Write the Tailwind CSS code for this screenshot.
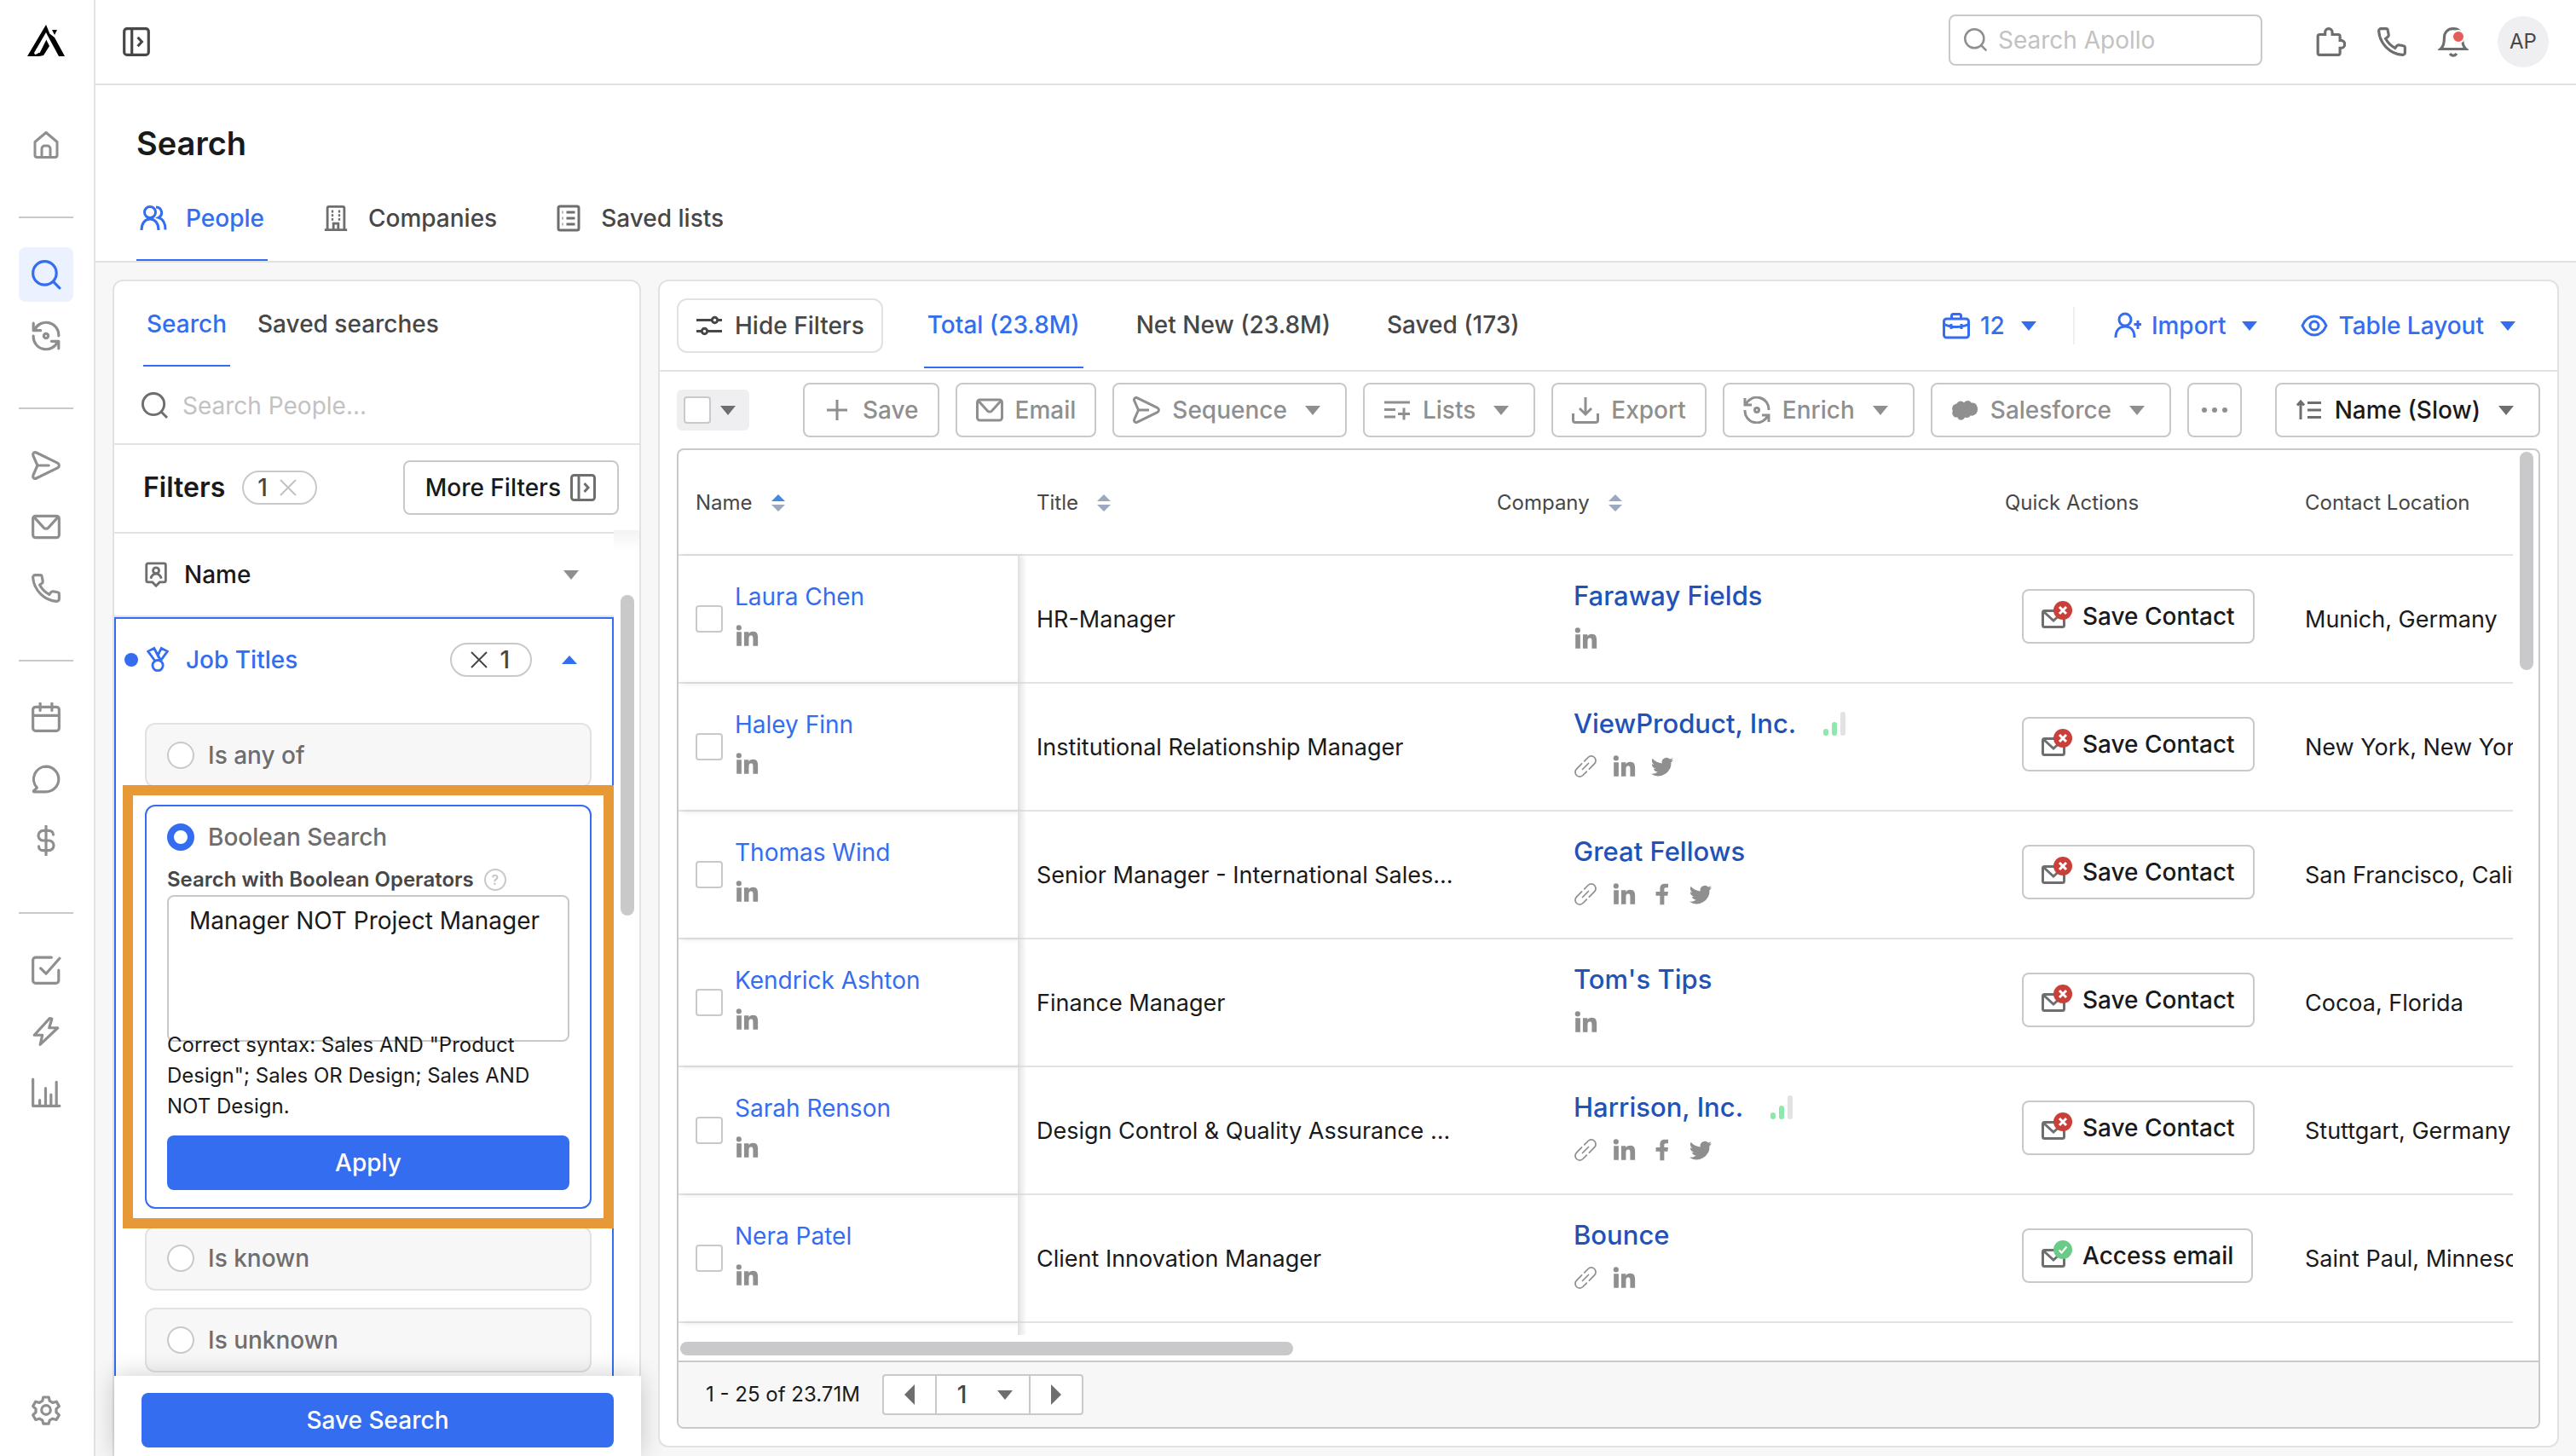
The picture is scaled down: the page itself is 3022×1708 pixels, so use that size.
<!DOCTYPE html>
<html lang="en">

<head>
    <meta charset="UTF-8">
    <meta name="viewport" content="width=device-width, initial-scale=1.0">
    <title>Search | Apollo</title>
    <script src="https://cdn.jsdelivr.net/npm/@tailwindcss/browser@4"></script>
</head>

<body class="flex h-screen overflow-hidden bg-white font-['Inter',sans-serif] text-[28px] leading-8 text-[#1a1a1a]">

    <!-- icon sprite -->
    <svg class="hidden" xmlns="http://www.w3.org/2000/svg">
        <defs>
            <g id="panel"><rect x="2.5" y="1.500" width="27" height="29" rx="3"/><path d="M11 2v28M17.500 11l4.500 5-4.500 5"/></g>
            <g id="home"><path d="M3 12.500 16 1.500l13 11V28a2.500 2.500 0 0 1-2.500 2.500h-21A2.500 2.500 0 0 1 3 28z"/><path d="M11 30V20.500a3.500 3.500 0 0 1 3.500-3.500h3a3.500 3.500 0 0 1 3.500 3.500V30"/></g>
            <g id="search"><circle cx="14.500" cy="14.500" r="13"/><path d="m24 24 7 7"/></g>
            <g id="enrich"><path d="M2 2v8h8M3 10A14 14 0 0 1 30 16M30 30v-8h-8M29 22A14 14 0 0 1 2 16"/><circle cx="16" cy="16" r="2.500"/></g>
            <g id="send"><path d="M1.700 5c-.8-2.500 1.300-4.300 3.600-3.200l23.500 11.500c2.200 1.100 2.200 4.300 0 5.400L5.300 30.200C3 31.300.9 29.500 1.700 27L6.500 16z"/><path d="M6.500 16H19"/></g>
            <g id="mail"><rect x="1.500" y="4" width="29" height="24" rx="3"/><path d="m3 5.500 10.500 11.500a3.500 3.500 0 0 0 5 0L29 5.500"/></g>
            <g id="phone"><path d="M4 1.500h5.500a2 2 0 0 1 2 1.700l.9 5a2.500 2.500 0 0 1-.9 2.300L9 12.500C11.500 17 15 20.500 19.500 23l2-2.500a2.500 2.500 0 0 1 2.300-.9l5 .9a2 2 0 0 1 1.700 2V28a2.500 2.500 0 0 1-2.700 2.500C14 29.500 2.500 18 1.500 4.200A2.500 2.500 0 0 1 4 1.500z"/></g>
            <g id="calendar"><rect x="1.500" y="4" width="29" height="26.500" rx="3"/><path d="M2 13.500h28M9.500 0v8M22.500 0v8"/></g>
            <g id="chat"><path d="M16 2a14 14 0 1 1 0 28H2.500c-.5 0-.5-.8 0-1.200L6 25.500A14 14 0 0 1 16 2z"/></g>
            <g id="dollar"><path d="M16 0v32M24 9.500C24 6.500 21.500 5 19 5h-6a5.500 5.500 0 0 0 0 11h6a5.500 5.500 0 0 1 0 11h-6c-2.500 0-5-1.500-5-4.500"/></g>
            <g id="check"><path d="M22 2H4.500a3 3 0 0 0-3 3v22.500a3 3 0 0 0 3 3H27a3 3 0 0 0 3-3V16"/><path d="m10 14 6 6L31 3"/></g>
            <g id="bolt"><path d="M20 1.500 3 20h9L9.500 30.500 29 12h-9.500L22.500 2z"/></g>
            <g id="chart"><path d="M1.500 1v29.500H31M9 24v6M15.500 11v19M21.500 18v12M27.500 4v26"/></g>
            <g id="gear"><circle cx="16" cy="16" r="5"/><path d="M13 1.800h6l1 4.200 3.300 1.900 4.200-1.200 3 5.200-3.200 3v3.700l3.200 3-3 5.200-4.200-1.200L20 27.500l-1 3.700h-6l-1-3.700-3.300-1.900-4.200 1.200-3-5.200 3.200-3v-3.700l-3.200-3 3-5.200 4.200 1.200L12 6z"/></g>
            <g id="people"><circle cx="12" cy="9" r="6.500"/><path d="M2 30c0-8 4-13 10-13s10 5 10 13M19 3a6.500 6.500 0 0 1 3 12.300c5 1.500 8 7 8 14.200"/></g>
            <g id="company"><path d="M5.500 30V3.500a2 2 0 0 1 2-2h17a2 2 0 0 1 2 2V30M2 30.500h28M13 30v-7.500h6V30"/><path d="M10.500 7.500h2.500M19 7.500h2.500M10.500 12.500h2.500M19 12.500h2.500M10.500 17.500h2.500M19 17.500h2.500"/></g>
            <g id="list"><rect x="4" y="2" width="24" height="28" rx="2"/><path d="M8.500 9h1M8.500 16h1M8.500 23h1M13.500 9h10M13.500 16h10M13.500 23h10"/></g>
            <g id="sliders"><path d="M1 9.500h18M26 9.500h5M1 22.500h6M14 22.500h17"/><circle cx="22.500" cy="9.500" r="3.200"/><circle cx="10.500" cy="22.500" r="3.200"/></g>
            <g id="badge"><path d="M6 2.500h20a2 2 0 0 1 2 2V24a2 2 0 0 1-2 2h-5.500L16 30.500 11.500 26H6a2 2 0 0 1-2-2V4.500a2 2 0 0 1 2-2z"/><circle cx="16" cy="11.500" r="3.700"/><path d="M9.500 21.500c1-4.500 3-6 6.500-6s5.500 1.500 6.500 6"/></g>
            <g id="medal"><circle cx="16" cy="23.500" r="6.500"/><path d="M12 17 4 6l7.500-4L16 11l4.500-9L28 6l-8 11M11.500 2 19 16"/></g>
            <g id="x"><path d="m7 7 18 18M25 7 7 25"/></g>
            <g id="plus"><path d="M16 4v24M4 16h24"/></g>
            <g id="addlist"><path d="M1 7h30M1 15.500h13M1 24h13M24 13.500v14M17 20.500h14"/></g>
            <g id="export"><path d="M16 1v19M9 14l7 7 7-7M1.500 20v8a2.500 2.500 0 0 0 2.500 2.500h24a2.500 2.500 0 0 0 2.500-2.500v-8"/></g>
            <g id="sort"><path d="M6 27V7M2 10.500 6 6l4 4.500M14 7.500h16M14 16h16M14 24.500h16"/></g>
            <g id="briefcase"><rect x="1.500" y="8" width="29" height="22" rx="3"/><path d="M10.500 8V4.500a2 2 0 0 1 2-2h7a2 2 0 0 1 2 2V8M2 14.500c8 4 20 4 28 0M10 14v6M22 14v6"/></g>
            <g id="useradd"><circle cx="13" cy="9" r="7"/><path d="M2 30c0-8 4-13 11-13s11 5 11 13M28 10v10M23.500 14.500h9"/></g>
            <g id="eye"><path d="M2 16C5 9 10 5 16 5s11 4 14 11c-3 7-8 11-14 11S5 23 2 16z"/><circle cx="16" cy="16" r="5"/></g>
            <g id="puzzle"><path d="M3 10a2 2 0 0 1 2-2h6V5.500a4 4 0 0 1 8 0V8h6.500a2 2 0 0 1 2 2v4.500h1a4 4 0 0 1 0 8.500h-1v5.500a2 2 0 0 1-2 2H5a2 2 0 0 1-2-2z"/></g>
            <g id="bell"><path d="M2 25h28c-3-2.500-4-6-4-12 0-6.500-4-10.500-10-10.500S6 6.500 6 13c0 6-1 9.500-4 12zM12.500 30c1.500 3 5.500 3 7 0"/></g>
            <g id="link"><path d="m14.500 9 5-5a5.800 5.800 0 0 1 8.500 8.500l-7 7M17.500 23l-5 5A5.800 5.800 0 0 1 4 19.500l7-7M12 20l8-8"/></g>
            <g id="cloud"><path d="M6 8c2-4 7-4 9-1 3-4 8-3 9 0 5-1 8 3 8 8s-4 9-9 8c-2 3-5 3-7 2-2 5-9 4-9 0-5 1-8-4-6-8-2-4 0-8 5-9z"/></g>
            <g id="linkedin"><circle cx="5.500" cy="5" r="3.500"/><path d="M2.500 10.500h6.500v19H2.500zM12.500 10.500h6.200v2.600c1-1.800 3-3.100 5.700-3.100 5.500 0 6.600 3.600 6.600 8.300v11.200h-6.500v-9.500c0-2.200 0-4.700-2.700-4.700s-3 2.200-3 4.700v9.500h-6.300z"/></g>
            <g id="facebook"><path d="M13 30V18H7.500v-5.500H13V8.500C13 4 15.500 2 19.500 2H24v5.200h-3c-1.800 0-2.300.8-2.300 2.300v3H24L23.200 18h-4.500v12z"/></g>
            <g id="twitter"><path d="M31 7.200a12 12 0 0 1-3.500 1c1.300-.8 2.200-2 2.700-3.400a12 12 0 0 1-3.900 1.500 6.200 6.200 0 0 0-10.600 5.600A17.500 17.500 0 0 1 3 5.500a6.200 6.200 0 0 0 1.900 8.200 6 6 0 0 1-2.800-.8c0 3 2 5.600 5 6.200a6 6 0 0 1-2.800.1 6.200 6.200 0 0 0 5.800 4.300A12.400 12.400 0 0 1 1 26a17.500 17.500 0 0 0 27-15.500 12 12 0 0 0 3-3.300z"/></g>
            <path id="caret" d="M7 11h18l-9 11z"/>
            <path id="caretup" d="M7 21h18l-9-10z"/>
        </defs>
    </svg>

    <nav aria-label="Main" class="flex w-28 shrink-0 flex-col items-center border-r-2 border-[#e2e2e2] pr-[2px] text-[#8f8f8f] fill-none stroke-current stroke-3 [stroke-linecap:round] [stroke-linejoin:round]">
        <a href="#" aria-label="Apollo" class="mt-7 mb-[98px] text-black"><svg class="h-10 w-12 fill-current stroke-none" viewBox="0 0 48 40"><path d="M24 1 29 13 26 14 24 10 10 34l2 4H2zM29 12l5 4 12 22h-7L26 14z"/><path d="M24 18 28 26 21 37 16 38H6l8-3 3-3z"/><path d="m24 17-8 16" stroke="#fff" stroke-width="2"/><path d="M31 7h6l-3 6z"/></svg></a>
        <a href="#" aria-label="Home" class="-mt-7 flex size-16 items-center justify-center rounded-lg"><svg class="size-9" viewBox="-2 -1 36 34"><use href="#home"/></svg></a>
        <hr class="mt-[52px] mb-[34px] w-16 border-t-2 border-[#c9c9c9]">
        <a href="#" aria-label="Search" class="flex size-16 items-center justify-center rounded-lg bg-[#ebf1fe] text-[#346df0]"><svg class="size-9" viewBox="-1 -1 34 34"><use href="#search"/></svg></a>
        <a href="#" aria-label="Enrich" class="mt-2 flex size-16 items-center justify-center"><svg class="size-9" viewBox="-1 -1 34 34"><use href="#enrich"/></svg></a>
        <hr class="mt-[52px] mb-[34px] w-16 border-t-2 border-[#c9c9c9]">
        <a href="#" aria-label="Sequences" class="flex size-16 items-center justify-center"><svg class="size-9" viewBox="-1 -1 34 34"><use href="#send"/></svg></a>
        <a href="#" aria-label="Emails" class="mt-2 flex size-16 items-center justify-center"><svg class="size-9" viewBox="-1 -1 34 34"><use href="#mail"/></svg></a>
        <a href="#" aria-label="Calls" class="mt-2 flex size-16 items-center justify-center"><svg class="size-9" viewBox="-1 -1 34 34"><use href="#phone"/></svg></a>
        <hr class="mt-[52px] mb-[34px] w-16 border-t-2 border-[#c9c9c9]">
        <a href="#" aria-label="Meetings" class="flex size-16 items-center justify-center"><svg class="size-9" viewBox="-1 -1 34 34"><use href="#calendar"/></svg></a>
        <a href="#" aria-label="Conversations" class="mt-2 flex size-16 items-center justify-center"><svg class="size-9" viewBox="-1 -1 34 34"><use href="#chat"/></svg></a>
        <a href="#" aria-label="Deals" class="mt-2 flex size-16 items-center justify-center"><svg class="size-9" viewBox="-1 -1 34 34"><use href="#dollar"/></svg></a>
        <hr class="mt-[52px] mb-[34px] w-16 border-t-2 border-[#c9c9c9]">
        <a href="#" aria-label="Tasks" class="flex size-16 items-center justify-center"><svg class="size-9" viewBox="-1 -1 34 34"><use href="#check"/></svg></a>
        <a href="#" aria-label="Workflows" class="mt-2 flex size-16 items-center justify-center"><svg class="size-9" viewBox="-1 -1 34 34"><use href="#bolt"/></svg></a>
        <a href="#" aria-label="Analytics" class="mt-2 flex size-16 items-center justify-center"><svg class="size-9" viewBox="-1 -1 34 34"><use href="#chart"/></svg></a>
        <a href="#" aria-label="Settings" class="mt-auto mb-[22px] flex size-16 items-center justify-center"><svg class="size-9" viewBox="-1 -1 34 34"><use href="#gear"/></svg></a>
    </nav>

    <div class="flex min-w-0 flex-1 flex-col">

        <!-- top bar -->
        <header class="flex h-[100px] shrink-0 items-center border-b-2 border-[#e2e2e2] pr-8 pl-[30px] text-[#6e6e6e]">
            <button aria-label="Expand menu" class="text-[#474747]"><svg class="size-9 fill-none stroke-current stroke-3" viewBox="-1 -1 34 34"><use href="#panel"/></svg></button>
            <label class="mr-[62px] mb-1 ml-auto flex h-15 w-[368px] items-center gap-3 rounded-lg border-2 border-[#c9c9c9] pl-4 text-[#8f8f8f]">
                <svg class="size-7 shrink-0 fill-none stroke-current stroke-3" viewBox="0 0 33 33"><use href="#search"/></svg>
                <input type="text" aria-label="Search Apollo" placeholder="Search Apollo" class="w-full outline-none placeholder:text-[#c2c2c2]">
            </label>
            <button aria-label="Extensions"><svg class="size-9 fill-none stroke-current stroke-3" viewBox="0 0 34 32"><use href="#puzzle"/></svg></button>
            <button aria-label="Dialer" class="ml-9"><svg class="size-9 fill-none stroke-current stroke-3" viewBox="-1 -1 34 34"><use href="#phone"/></svg></button>
            <button aria-label="Notifications" class="relative ml-9">
                <svg class="size-9 fill-none stroke-current stroke-3" viewBox="-1 0 34 34"><use href="#bell"/></svg>
                <span class="absolute top-1 right-1 size-4 rounded-full border-2 border-white bg-[#e95b5b]"></span>
            </button>
            <button aria-label="Account" class="ml-[34px] size-15 rounded-full bg-[#efeff1] text-2xl text-[#474747]">AP</button>
        </header>

        <!-- page title and tabs -->
        <div class="flex h-[208px] shrink-0 flex-col justify-between border-b-2 border-[#e2e2e2] px-12">
            <h1 class="mt-11 text-[38px] leading-12 font-semibold">Search</h1>
            <div class="flex gap-15 font-medium text-[#474747]">
                <a href="#" class="flex h-[100px] items-center gap-[22px] border-b-2 border-[#346df0] px-1 pt-[2px] text-[#346df0]"><svg class="size-8 fill-none stroke-current stroke-3" viewBox="0 0 32 32"><use href="#people"/></svg>People</a>
                <a href="#" class="flex h-[100px] items-center gap-[22px] border-b-2 border-transparent px-1 pt-[2px]"><svg class="size-8 fill-none stroke-[#6e6e6e] stroke-3" viewBox="-1 -1 34 34"><use href="#company"/></svg>Companies</a>
                <a href="#" class="flex h-[100px] items-center gap-[22px] border-b-2 border-transparent px-1 pt-[2px]"><svg class="size-8 fill-none stroke-[#6e6e6e] stroke-3" viewBox="0 0 32 32"><use href="#list"/></svg>Saved lists</a>
            </div>
        </div>

        <main class="flex min-h-0 flex-1 gap-5 bg-[#f7f7f7] px-5 pt-5">

            <!-- filters -->
            <aside class="flex w-[620px] shrink-0 flex-col rounded-t-xl border-2 border-b-0 border-[#e2e2e2] bg-white">
                <div class="flex h-[100px] shrink-0 gap-7 px-[34px] font-medium text-[#474747]">
                    <a href="#" class="flex items-center border-b-2 border-[#346df0] px-1 pt-[2px] text-[#346df0]">Search</a>
                    <a href="#" class="flex items-center border-b-2 border-transparent px-1 pt-[2px]">Saved searches</a>
                </div>
                <label class="flex h-[92px] shrink-0 items-center gap-4 border-b-2 border-[#e2e2e2] pt-[2px] pl-8 text-[#6e6e6e]">
                    <svg class="size-8 shrink-0 fill-none stroke-current stroke-3" viewBox="0 0 33 33"><use href="#search"/></svg>
                    <input type="text" aria-label="Search People" placeholder="Search People..." class="w-full outline-none placeholder:text-[#c2c2c2]">
                </label>
                <div class="flex h-[100px] shrink-0 items-center pr-6 pl-[34px]">
                    <h2 class="text-[32px] font-semibold">Filters</h2>
                    <button class="ml-5 flex h-10 items-center gap-2 rounded-full border-2 border-[#c9c9c9] px-4 font-medium text-[#474747]">1 <svg class="size-8 stroke-[#c2c2c2] stroke-2" viewBox="0 0 32 32"><use href="#x"/></svg></button>
                    <button class="ml-auto flex h-16 items-center gap-[10px] rounded-lg border-2 border-[#c9c9c9] px-6 font-medium">More Filters<svg class="size-8 fill-none stroke-[#6e6e6e] stroke-3" viewBox="0 0 32 32"><use href="#panel"/></svg></button>
                </div>

                <div class="flex min-h-0 flex-1 overflow-hidden">
                    <div class="min-w-0 flex-1 pt-[2px]">
                        <button class="flex h-[100px] w-full items-center gap-4 border-y-2 border-[#e2e2e2] px-[34px] font-medium">
                            <svg class="size-8 fill-none stroke-[#6e6e6e] stroke-3" viewBox="0 0 34 33"><use href="#badge"/></svg>
                            Name
                            <svg class="ml-auto size-8 fill-[#8f8f8f]" viewBox="0 0 32 32"><use href="#caret"/></svg>
                        </button>
                        <section class="border-2 border-[#346df0] pb-6">
                            <div class="flex h-24 items-center pr-[34px] pl-[10px] font-medium text-[#346df0]">
                                <span class="mr-2 size-4 rounded-full bg-[#346df0]"></span>
                                <svg class="mr-4 size-8 fill-none stroke-current stroke-3" viewBox="0 0 34 33"><use href="#medal"/></svg>
                                Job Titles
                                <button class="ml-auto flex h-10 items-center gap-2 rounded-full border-2 border-[#c9c9c9] pr-6 pl-4 text-[#474747]"><svg class="size-8 stroke-current stroke-2" viewBox="0 0 32 32"><use href="#x"/></svg>1</button>
                                <svg class="ml-7 size-8 fill-current" viewBox="0 0 32 32"><use href="#caretup"/></svg>
                            </div>
                            <div class="mt-[26px] flex flex-col gap-5 pr-6 pl-[34px] font-medium text-[#6e6e6e]">
                                <label class="flex h-[76px] items-center gap-4 rounded-xl border-2 border-[#e2e2e2] bg-[#f7f7f7] px-6">
                                    <input type="radio" name="titles" class="size-8 appearance-none rounded-full border-2 border-[#c9c9c9] bg-white">
                                    Is any of
                                </label>
                                <div class="relative rounded-xl border-2 border-[#346df0] px-6 py-5">
                                    <div class="pointer-events-none absolute -inset-x-7 -inset-y-[25px] z-10 border-12 border-[#e69936]"></div>
                                    <label class="flex items-center gap-4">
                                        <input type="radio" name="titles" checked class="size-8 appearance-none rounded-full border-8 border-[#346df0] bg-white">
                                        Boolean Search
                                    </label>
                                    <div class="mt-4 flex h-9 items-center gap-3 text-2xl text-[#474747]">
                                        <label for="boolean" class="font-semibold">Search with Boolean Operators</label>
                                        <span class="flex size-[26px] items-center justify-center rounded-full border-2 border-[#c9c9c9] text-base font-medium text-[#c2c2c2]">?</span>
                                    </div>
                                    <textarea id="boolean" class="block h-[172px] w-full resize-none rounded-lg border-2 border-[#c9c9c9] px-6 py-3 text-[28px] leading-8 font-normal text-[#1a1a1a] outline-none">Manager NOT Project Manager</textarea>
                                    <p class="-mt-[14px] text-2xl leading-9 font-normal text-[#1a1a1a]">Correct syntax: Sales AND "Product Design"; Sales OR Design; Sales AND NOT Design.</p>
                                    <button class="mt-4 h-16 w-full rounded-lg bg-[#346df0] text-white">Apply</button>
                                </div>
                                <label class="flex h-[76px] items-center gap-4 rounded-xl border-2 border-[#e2e2e2] bg-[#f7f7f7] px-6">
                                    <input type="radio" name="titles" class="size-8 appearance-none rounded-full border-2 border-[#c9c9c9] bg-white">
                                    Is known
                                </label>
                                <label class="flex h-[76px] items-center gap-4 rounded-xl border-2 border-[#e2e2e2] bg-[#f7f7f7] px-6">
                                    <input type="radio" name="titles" class="size-8 appearance-none rounded-full border-2 border-[#c9c9c9] bg-white">
                                    Is unknown
                                </label>
                            </div>
                        </section>
                    </div>
                    <div class="w-[30px] bg-linear-to-b from-[#f3f3f3] to-white to-[24px] pt-[76px] pl-2">
                        <div class="h-[376px] w-4 rounded-full bg-[#c9c9cb]"></div>
                    </div>
                </div>
                <div class="-mr-[2px] shrink-0 bg-white px-8 pt-5 pb-[10px] shadow-[0_0_28px_rgba(0,0,0,0.2)]">
                    <button class="h-16 w-full rounded-lg bg-[#346df0] font-medium text-white">Save Search</button>
                </div>
            </aside>

            <!-- results -->
            <section class="mb-[10px] flex min-w-0 flex-1 flex-col rounded-xl border-2 border-[#e2e2e2] bg-white">
                <div class="flex h-[106px] shrink-0 items-center border-b-2 border-[#e2e2e2] pr-[42px] pl-5 font-medium text-[#474747]">
                    <button class="flex h-16 items-center gap-[14px] rounded-xl border-2 border-[#e2e2e2] px-5"><svg class="size-8 fill-none stroke-current stroke-3" viewBox="0 0 32 32"><use href="#sliders"/></svg>Hide Filters</button>
                    <div class="ml-12 flex gap-[58px] self-start">
                        <a href="#" class="flex h-[102px] items-center border-b-2 border-[#346df0] px-1 pt-[2px] text-[#346df0]">Total (23.8M)</a>
                        <a href="#" class="flex h-[102px] items-center border-b-2 border-transparent px-1 pt-[2px]">Net New (23.8M)</a>
                        <a href="#" class="flex h-[102px] items-center border-b-2 border-transparent px-1 pt-[2px]">Saved (173)</a>
                    </div>
                    <div class="ml-auto flex items-center fill-none stroke-3 text-[#346df0]">
                        <button class="flex items-center gap-3"><svg class="size-8 stroke-current" viewBox="0 0 32 32"><use href="#briefcase"/></svg>12<svg class="size-8 fill-current" viewBox="0 0 32 32"><use href="#caret"/></svg></button>
                        <span class="mr-[46px] ml-9 h-11 w-[2px] bg-[#efeff1]"></span>
                        <button class="flex items-center gap-3"><svg class="size-8 stroke-current" viewBox="0 0 32 32"><use href="#useradd"/></svg>Import<svg class="size-8 fill-current" viewBox="0 0 32 32"><use href="#caret"/></svg></button>
                        <button class="ml-11 flex items-center gap-3"><svg class="size-8 stroke-current" viewBox="0 0 32 32"><use href="#eye"/></svg>Table Layout<svg class="size-8 fill-current" viewBox="0 0 32 32"><use href="#caret"/></svg></button>
                    </div>
                </div>

                <div class="flex h-[90px] shrink-0 items-center gap-[19px] px-5 font-medium text-[#8f8f8f]">
                    <div class="mr-11 flex h-12 items-center rounded-md bg-[#efeff1] pr-[9px] pl-2">
                        <input type="checkbox" aria-label="Select all" class="size-8 appearance-none rounded-sm border-2 border-[#c9c9c9] bg-white">
                        <svg class="ml-1 size-8 fill-[#6e6e6e]" viewBox="0 0 32 32"><use href="#caret"/></svg>
                    </div>
                    <button class="flex h-16 items-center gap-[14px] rounded-lg border-2 border-[#c9c9c9] px-[22px]"><svg class="size-8 fill-none stroke-current stroke-3" viewBox="0 0 32 32"><use href="#plus"/></svg>Save</button>
                    <button class="flex h-16 items-center gap-[14px] rounded-lg border-2 border-[#c9c9c9] px-[22px]"><svg class="size-8 fill-none stroke-current stroke-3" viewBox="0 0 32 32"><use href="#mail"/></svg>Email</button>
                    <button class="flex h-16 items-center gap-[14px] rounded-lg border-2 border-[#c9c9c9] px-[22px]"><svg class="size-8 fill-none stroke-current stroke-3" viewBox="0 0 32 32"><use href="#send"/></svg>Sequence<svg class="size-8 fill-current" viewBox="0 0 32 32"><use href="#caret"/></svg></button>
                    <button class="flex h-16 items-center gap-[14px] rounded-lg border-2 border-[#c9c9c9] px-[22px]"><svg class="size-8 fill-none stroke-current stroke-3" viewBox="0 0 32 32"><use href="#addlist"/></svg>Lists<svg class="size-8 fill-current" viewBox="0 0 32 32"><use href="#caret"/></svg></button>
                    <button class="flex h-16 items-center gap-[14px] rounded-lg border-2 border-[#c9c9c9] px-[22px]"><svg class="size-8 fill-none stroke-current stroke-3" viewBox="0 0 32 32"><use href="#export"/></svg>Export</button>
                    <button class="flex h-16 items-center gap-[14px] rounded-lg border-2 border-[#c9c9c9] px-[22px]"><svg class="size-8 fill-none stroke-current stroke-3" viewBox="0 0 32 32"><use href="#enrich"/></svg>Enrich<svg class="size-8 fill-current" viewBox="0 0 32 32"><use href="#caret"/></svg></button>
                    <button class="flex h-16 items-center gap-[14px] rounded-lg border-2 border-[#c9c9c9] px-[22px]"><svg class="size-8 fill-current" viewBox="-1 -1 34 34"><use href="#cloud"/></svg>Salesforce<svg class="size-8 fill-current" viewBox="0 0 32 32"><use href="#caret"/></svg></button>
                    <button aria-label="More actions" class="flex size-16 items-center justify-center rounded-lg border-2 border-[#c9c9c9]"><svg class="size-8 fill-current" viewBox="0 0 32 32"><circle cx="4" cy="16" r="3"/><circle cx="16" cy="16" r="3"/><circle cx="28" cy="16" r="3"/></svg></button>
                    <button class="ml-auto flex h-16 items-center gap-[14px] rounded-lg border-2 border-[#c9c9c9] px-[22px] text-[#1a1a1a]"><svg class="size-8 fill-none stroke-[#6e6e6e] stroke-3" viewBox="0 0 32 32"><use href="#sort"/></svg>Name (Slow)<svg class="size-8 fill-[#6e6e6e]" viewBox="0 0 32 32"><use href="#caret"/></svg></button>
                </div>

                <div class="mx-5 mb-5 flex min-h-0 flex-1 flex-col overflow-hidden rounded-lg border-2 border-[#c9c9c9]">
                    <div class="flex min-h-0 flex-1">
                        <div class="min-w-0 flex-1 overflow-hidden">
                            <table class="w-full table-fixed border-separate border-spacing-0 text-left text-[27px] whitespace-nowrap">
                                <thead class="text-2xl text-[#474747]">
                                    <tr class="h-[124px]">
                                        <th class="w-[400px] border-b-2 border-[#e2e2e2] pt-[2px] pl-5 font-normal"><span class="flex items-center gap-[22px]">Name<svg class="h-5 w-4 fill-[#9ca8bd]" viewBox="0 0 16 20"><path class="fill-[#4389e3]" d="M0 8 8 0l8 8z"/><path d="M0 12h16l-8 8z"/></svg></span></th>
                                        <th class="w-[540px] border-b-2 border-[#e2e2e2] pt-[2px] pl-5 font-normal"><span class="flex items-center gap-[22px]">Title<svg class="h-5 w-4 fill-[#9ca8bd]" viewBox="0 0 16 20"><path d="M0 8 8 0l8 8zM0 12h16l-8 8z"/></svg></span></th>
                                        <th class="w-[596px] border-b-2 border-[#e2e2e2] pt-[2px] pl-5 font-normal"><span class="flex items-center gap-[22px]">Company<svg class="h-5 w-4 fill-[#9ca8bd]" viewBox="0 0 16 20"><path d="M0 8 8 0l8 8zM0 12h16l-8 8z"/></svg></span></th>
                                        <th class="w-[352px] border-b-2 border-[#e2e2e2] pt-[2px] pl-5 font-normal">Quick Actions</th>
                                        <th class="border-b-2 border-[#e2e2e2] pt-[2px] pl-5 font-normal">Contact Location</th>
                                    </tr>
                                </thead>
                                <tbody id="rows"></tbody>
                            </table>
                        </div>
                        <div class="w-[30px] pt-[2px] pl-2">
                            <div class="h-64 w-4 rounded-full bg-[#c9c9cb]"></div>
                        </div>
                    </div>
                    <div class="h-[30px] shrink-0 px-[2px] pt-2">
                        <div class="h-4 w-[33%] rounded-full bg-[#c9c9cb]"></div>
                    </div>
                    <div class="flex h-[78px] shrink-0 items-center gap-[26px] border-t-2 border-[#c9c9c9] bg-[#f7f7f7] pl-8">
                        <span class="text-2xl">1 - 25 of 23.71M</span>
                        <div class="flex h-12 items-stretch divide-x-2 divide-[#c9c9c9] rounded-sm border-2 border-[#c9c9c9] bg-white text-[#474747]">
                            <button aria-label="Previous page" class="flex w-[62px] items-center justify-center"><svg class="h-6 w-3 fill-[#6e6e6e]" viewBox="0 0 12 24"><path d="M12 0v24L0 12z"/></svg></button>
                            <div class="relative w-[110px]">
                                <select aria-label="Page" class="h-full w-full appearance-none pl-6 font-medium outline-none"><option>1</option></select>
                                <svg class="pointer-events-none absolute top-1.5 right-3 size-8 fill-[#6e6e6e]" viewBox="0 0 32 32"><use href="#caret"/></svg>
                            </div>
                            <button aria-label="Next page" class="flex w-[60px] items-center justify-center"><svg class="h-6 w-3 fill-[#6e6e6e]" viewBox="0 0 12 24"><path d="M0 0v24l12-12z"/></svg></button>
                        </div>
                    </div>
                </div>
            </section>
        </main>
    </div>

    <script>
        const people = [
            { name: "Laura Chen", title: "HR-Manager", company: "Faraway Fields", links: ["linkedin"], location: "Munich, Germany" },
            { name: "Haley Finn", title: "Institutional Relationship Manager", company: "ViewProduct, Inc.", growth: true, links: ["link", "linkedin", "twitter"], location: "New York, New York" },
            { name: "Thomas Wind", title: "Senior Manager - International Sales...", company: "Great Fellows", links: ["link", "linkedin", "facebook", "twitter"], location: "San Francisco, California" },
            { name: "Kendrick Ashton", title: "Finance Manager", company: "Tom's Tips", links: ["linkedin"], location: "Cocoa, Florida" },
            { name: "Sarah Renson", title: "Design Control &amp; Quality Assurance ...", company: "Harrison, Inc.", growth: true, links: ["link", "linkedin", "facebook", "twitter"], location: "Stuttgart, Germany" },
            { name: "Nera Patel", title: "Client Innovation Manager", company: "Bounce", links: ["link", "linkedin"], location: "Saint Paul, Minnesota", verified: true },
        ];

        const bars = `<svg class="h-7 w-[26px]" viewBox="0 0 26 28"><rect y="20" width="6" height="8" rx="3" fill="#8ce8ab"/><rect x="10" y="12" width="6" height="16" rx="3" fill="#8ce8ab"/><rect x="20" width="6" height="28" rx="3" fill="#e2e2e4"/></svg>`;

        const noEmail = `<circle cx="25" cy="11" r="11" fill="#c9403a"/><path d="m21 7 8 8M29 7l-8 8" stroke="#fff" stroke-width="3"/>`;
        const hasEmail = `<circle cx="25" cy="11" r="11" fill="#6acb89"/><path d="m20.500 11.500 3 3 6-7" fill="none" stroke="#fff" stroke-width="2"/>`;

        function icon(id) {
            const style = id === "link" ? "fill-none stroke-current stroke-2 [stroke-linecap:round]" : "fill-current";
            return `<a href="#" aria-label="${id}"><svg class="size-7 ${style}" viewBox="0 0 32 32"><use href="#${id}"/></svg></a>`;
        }

        const line = "border-b-2 border-[#e2e2e2]";

        document.querySelector("#rows").innerHTML = people.map(p => `
            <tr class="h-[150px]">
                <td class="border-r-2 border-b-2 border-[#e2e2e2] pl-5 shadow-[4px_0_6px_rgba(0,0,0,0.1)]">
                    <div class="flex items-center gap-[14px]">
                        <input type="checkbox" aria-label="Select ${p.name}" class="size-8 appearance-none rounded-sm border-2 border-[#c9c9c9]">
                        <div class="flex flex-col gap-4 pb-2">
                            <a href="#" class="text-[28px] text-[#346df0]">${p.name}</a>
                            <div class="flex text-[#8f8f8f]">${icon("linkedin")}</div>
                        </div>
                    </div>
                </td>
                <td class="pt-[2px] pl-5 ${line}">${p.title}</td>
                <td class="pb-1.5 pl-[110px] ${line}">
                    <div class="flex flex-col gap-5">
                        <div class="flex items-center gap-8 text-[31px]"><a href="#" class="font-medium text-[#2152b8]">${p.company}</a>${p.growth ? bars : ""}</div>
                        <div class="flex gap-[17px] text-[#8f8f8f]">${p.links.map(icon).join("")}</div>
                    </div>
                </td>
                <td class="pb-1.5 pl-10 ${line}">
                    <button class="flex h-16 items-center gap-3 rounded-lg border-2 border-[#c9c9c9] px-[21px] text-[28px] font-medium">
                        <svg class="mb-1 h-8 w-9" viewBox="0 0 36 32"><g fill="none" stroke="#6e6e6e" stroke-width="3"><rect x="1.500" y="11.500" width="25" height="19" rx="2"/><path d="m3 13 11 10 11-10"/></g>${p.verified ? hasEmail : noEmail}</svg>
                        ${p.verified ? "Access email" : "Save Contact"}
                    </button>
                </td>
                <td class="overflow-hidden pt-[2px] pl-5 ${line}">${p.location}</td>
            </tr>`).join("") + `
            <tr class="h-[150px]"><td class="border-r-2 border-[#e2e2e2] shadow-[4px_0_6px_rgba(0,0,0,0.1)]"></td><td colspan="4"></td></tr>`;
    </script>
</body>

</html>
